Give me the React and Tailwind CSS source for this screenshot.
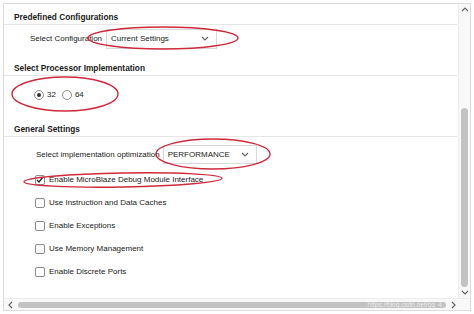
const font = { fontFamily: '"Liberation Sans", Arial, sans-serif' };

const checks = [
  { label: 'Enable MicroBlaze Debug Module Interface', checked: true },
  { label: 'Use Instruction and Data Caches', checked: false },
  { label: 'Enable Exceptions', checked: false },
  { label: 'Use Memory Management', checked: false },
  { label: 'Enable Discrete Ports', checked: false },
];

const Chevron = ({ dir = 'down', className = '' }) => {
  const pts = {
    down: '1,2 4,5 7,2',
    up: '1,5 4,2 7,5',
    left: '5,1 2,4 5,7',
    right: '3,1 6,4 3,7',
  }[dir];
  return (
    <svg width="8" height="8" viewBox="0 0 8 8" className={className}>
      <polyline points={pts} fill="none" stroke="#666" strokeWidth="1.2" />
    </svg>
  );
};

const Section = ({ title, top }) => (
  <div className={`mr-[1px] border-b border-[#e6e6e6] pb-[2px] pl-[10px] ${top}`}>
    <div className="text-[8.3px] font-bold leading-[10px] text-[#1a1a1a]">{title}</div>
  </div>
);

const Select = ({ value, className }) => (
  <div className={`flex items-center justify-between border border-[#dadada] bg-white pl-[4px] pr-[7px] ${className}`}>
    <span className="text-[8px] text-[#222]">{value}</span>
    <Chevron />
  </div>
);

const Radio = ({ checked, label }) => (
  <div className="flex items-center gap-[3px]">
    <div className="flex h-[10px] w-[10px] items-center justify-center rounded-full border border-[#8c8c8c] bg-white">
      {checked && <div className="h-[4px] w-[4px] rounded-full bg-[#333]" />}
    </div>
    <span className="text-[8px] text-[#222]">{label}</span>
  </div>
);

const Check = ({ checked, label }) => (
  <div className="flex h-[23px] items-center gap-[4px] pl-[31px]">
    <div className="flex h-[10px] w-[10px] items-center justify-center rounded-[2px] border border-[#8c8c8c] bg-white">
      {checked && (
        <svg width="8" height="8" viewBox="0 0 8 8">
          <polyline points="1,4 3,6 7,1" fill="none" stroke="#222" strokeWidth="1.3" />
        </svg>
      )}
    </div>
    <span className="text-[8px] text-[#222]">{label}</span>
  </div>
);

export default function App() {
  return (
    <div className="relative h-[314px] w-[474px] overflow-hidden bg-white p-[3px]" style={font}>
      <div className="flex h-full flex-col border border-[#dcdcdc]">
        <div className="flex min-h-0 flex-1">
          <div className="flex-1">
            <Section title="Predefined Configurations" top="pt-[8px]" />
            <div className="mt-[4px] flex items-center gap-[4px] pl-[26px]">
              <span className="text-[8px] text-[#222]">Select Configuration</span>
              <Select value="Current Settings" className="h-[20px] w-[111px]" />
            </div>

            <Section title="Select Processor Implementation" top="pt-[14px]" />
            <div className="mt-[13px] flex h-[12px] items-center gap-[6px] pl-[30px]">
              <Radio checked label="32" />
              <Radio label="64" />
            </div>

            <Section title="General Settings" top="pt-[23px]" />
            <div className="mt-[8px] flex items-center gap-[3px] pl-[32px]">
              <span className="text-[8px] text-[#222]">Select implementation optimization</span>
              <Select value="PERFORMANCE" className="h-[19px] w-[94px]" />
            </div>

            <div className="mt-[4px]">
              {checks.map((c) => (
                <Check key={c.label} {...c} />
              ))}
            </div>
          </div>

          {/* vertical scrollbar */}
          <div className="flex w-[12px] flex-col items-center border-l border-[#ececec] bg-[#f8f8f8]">
            <div className="flex h-[12px] items-center">
              <Chevron dir="up" />
            </div>
            <div className="flex-1">
              <div className="mt-[92px] h-[179px] w-[7px] rounded-full bg-[#c2c2c2]" />
            </div>
            <div className="flex h-[11px] items-center">
              <Chevron dir="down" />
            </div>
          </div>
        </div>

        {/* horizontal scrollbar */}
        <div className="flex h-[12px] items-center border-t border-[#ececec] bg-[#f8f8f8]">
          <div className="flex w-[14px] justify-center">
            <Chevron dir="left" />
          </div>
          <div className="relative h-[6px] w-[428px] rounded-full bg-[#c2c2c2]">
            <span className="absolute right-[4px] top-[-1px] text-[6.5px] leading-[8px] text-white/70">
              https://blog.csdn.net/qq_4
            </span>
          </div>
          <div className="flex w-[14px] justify-center">
            <Chevron dir="right" />
          </div>
          <div className="flex-1" />
        </div>
      </div>

      {/* hand-drawn annotation ellipses */}
      <svg className="pointer-events-none absolute left-0 top-0" width="474" height="314">
        <g fill="none" stroke="#cf2a3c" strokeWidth="1.4">
          <ellipse cx="163" cy="38" rx="75" ry="11" />
          <ellipse cx="65" cy="94" rx="53" ry="17" />
          <ellipse cx="213" cy="154" rx="57" ry="15" />
          <ellipse cx="123" cy="180" rx="99" ry="7" transform="rotate(-1 123 180)" />
        </g>
      </svg>
    </div>
  );
}
